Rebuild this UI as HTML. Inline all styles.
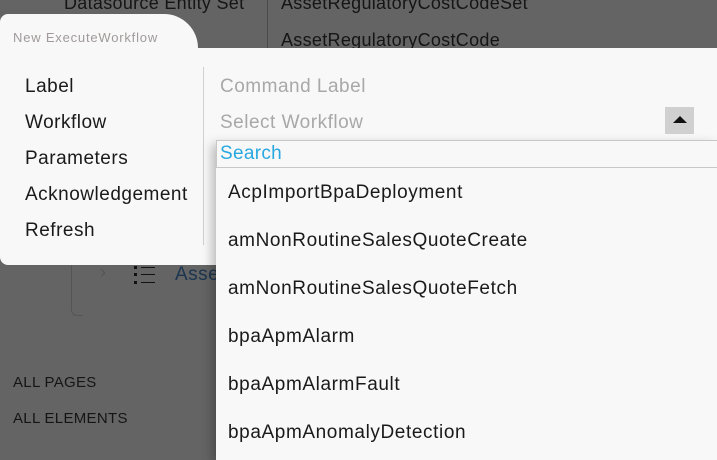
<!DOCTYPE html>
<html><head><style>
*{margin:0;padding:0;box-sizing:border-box}
body{width:717px;height:460px;overflow:hidden;background:#646464;font-family:"Liberation Sans",sans-serif;position:relative}
.a{position:absolute;white-space:nowrap}
.bg{color:#151515;font-size:18px;letter-spacing:0.3px}
.panel{position:absolute;left:0;top:48px;width:717px;height:217px;background:#f8f8f8;border-bottom-left-radius:8px}
.tab{position:absolute;left:0;top:14px;width:198px;height:40px;background:#f8f8f8;border-top-left-radius:8px;border-top-right-radius:34px}
.lbl{font-size:19px;letter-spacing:0.5px;color:#1a1a1a;left:25px}
.ph{font-size:19px;letter-spacing:0.5px;color:#a8a8a8;left:220px}
.dd{position:absolute;left:216px;top:140px;width:501px;height:320px;background:#f8f8f8;box-shadow:-4px 4px 10px rgba(0,0,0,.25)}
.it{position:absolute;left:12px;font-size:19px;letter-spacing:0.6px;color:#1a1a1a}
</style></head><body>
<div class="a bg" style="left:64px;top:-7px">Datasource Entity Set</div>
<div style="position:absolute;left:267px;top:0;width:1px;height:48px;background:#4a4a4a"></div>
<div class="a bg" style="left:281px;top:-7px">AssetRegulatoryCostCodeSet</div>
<div class="a bg" style="left:281px;top:30px">AssetRegulatoryCostCode</div>

<div style="position:absolute;left:71px;top:262px;width:12px;height:54px;border-left:1px solid #555;border-bottom:1px solid #555;border-bottom-left-radius:6px"></div>
<div class="a" style="left:100px;top:262px;color:#555;font-size:18px">&#8250;</div>
<div style="position:absolute;left:134px;top:266px;width:3px;height:3px;background:#111"></div>
<div style="position:absolute;left:134px;top:273px;width:3px;height:3px;background:#111"></div>
<div style="position:absolute;left:134px;top:281px;width:3px;height:3px;background:#111"></div>
<div style="position:absolute;left:141px;top:267px;width:14px;height:1px;background:#111"></div>
<div style="position:absolute;left:141px;top:274px;width:14px;height:1px;background:#111"></div>
<div style="position:absolute;left:141px;top:282px;width:14px;height:1px;background:#111"></div>
<div class="a" style="left:175px;top:264px;color:#1b3550;font-size:19px;letter-spacing:0.5px">Asse</div>
<div class="a" style="left:13px;top:374px;color:#151515;font-size:15px;letter-spacing:0.3px">ALL PAGES</div>
<div class="a" style="left:13px;top:410px;color:#151515;font-size:15px;letter-spacing:0.3px">ALL ELEMENTS</div>

<div class="tab"></div>
<div class="panel"></div>
<div class="a" style="left:13px;top:30px;font-size:13px;letter-spacing:0.8px;color:#a09a9a">New ExecuteWorkflow</div>
<div style="position:absolute;left:203px;top:67px;width:1px;height:178px;background:#d0d0d0"></div>
<div class="a lbl" style="top:76px">Label</div>
<div class="a lbl" style="top:112px">Workflow</div>
<div class="a lbl" style="top:148px">Parameters</div>
<div class="a lbl" style="top:184px">Acknowledgement</div>
<div class="a lbl" style="top:220px">Refresh</div>
<div class="a ph" style="top:76px">Command Label</div>
<div class="a ph" style="top:112px">Select Workflow</div>
<div style="position:absolute;left:665px;top:107px;width:29px;height:27px;background:#d0d0d0"></div>
<div style="position:absolute;left:673px;top:116px;width:0;height:0;border-left:7px solid transparent;border-right:7px solid transparent;border-bottom:7px solid #111"></div>
<div style="position:absolute;left:216px;top:140px;width:501px;height:1px;background:#c8c8c8"></div>

<div class="dd">
<div style="position:absolute;left:0;top:0;width:501px;height:28px;border:1px solid #c8c8c8;border-right:none"></div>
<div class="a" style="left:4px;top:3px;font-size:19px;letter-spacing:0.3px;color:#29a8e0">Search</div>
<div class="it" style="top:42px">AcpImportBpaDeployment</div>
<div class="it" style="top:90px">amNonRoutineSalesQuoteCreate</div>
<div class="it" style="top:138px">amNonRoutineSalesQuoteFetch</div>
<div class="it" style="top:186px">bpaApmAlarm</div>
<div class="it" style="top:234px">bpaApmAlarmFault</div>
<div class="it" style="top:282px">bpaApmAnomalyDetection</div>
</div>
</body></html>
